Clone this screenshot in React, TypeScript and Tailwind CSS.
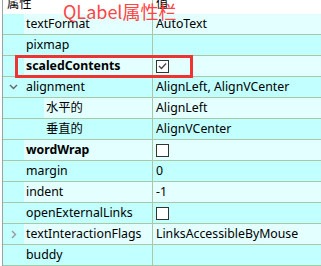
import React from "react";

type Row = {
  name: string;
  value?: string;
  check?: "on" | "off";
  bold?: boolean;
  child?: boolean;
  arrow?: "down" | "right";
};

const rows: Row[] = [
  { name: "textFormat", value: "AutoText" },
  { name: "pixmap" },
  { name: "scaledContents", check: "on", bold: true },
  { name: "alignment", value: "AlignLeft, AlignVCenter", arrow: "down" },
  { name: "水平的", value: "AlignLeft", child: true },
  { name: "垂直的", value: "AlignVCenter", child: true },
  { name: "wordWrap", check: "off", bold: true },
  { name: "margin", value: "0" },
  { name: "indent", value: "-1" },
  { name: "openExternalLinks", check: "off" },
  { name: "textInteractionFlags", value: "LinksAccessibleByMouse", arrow: "right" },
  { name: "buddy" },
];

const font = { fontFamily: '"Noto Sans", "Noto Sans CJK SC", sans-serif' };

function Check({ on }: { on: boolean }) {
  return (
    <div className="w-[13px] h-[13px] border border-[#333] bg-white flex items-center justify-center">
      {on && (
        <svg width="9" height="8" viewBox="0 0 9 8">
          <path d="M1 4 L3.5 6.5 L8 1.5" stroke="#444" strokeWidth="1.3" fill="none" />
        </svg>
      )}
    </div>
  );
}

export default function App() {
  return (
    <div className="relative w-[321px] h-[266px] overflow-hidden bg-white text-[12.3px] text-black" style={font}>
      <div className="ml-[2px] border-l border-[#a0a0a0] h-full">
        {/* header */}
        <div className="flex h-[14px] overflow-hidden bg-white">
          <div className="w-[149px] pl-[4px] leading-[14px] mt-[-3px]">属性</div>
          <div className="border-l border-[#a8c8a8] pl-[3px] leading-[14px] mt-[-3px]">值</div>
        </div>

        {rows.map((r, i) => {
          const light = i % 2 === 0;
          const bg = light ? "bg-[#e4ffff]" : "bg-[#c2ffff]";
          return (
            <div key={i} className="flex h-[21px] border-b border-[#a8c8a8]">
              <div className={`${r.child ? "w-[41px]" : "w-[21px]"} bg-[#c2ffff] flex items-center justify-center shrink-0`}>
                {r.arrow === "down" && (
                  <svg width="9" height="6" viewBox="0 0 9 6">
                    <path d="M1 1 L4.5 4.5 L8 1" stroke="#666" strokeWidth="1.4" fill="none" />
                  </svg>
                )}
                {r.arrow === "right" && (
                  <svg width="6" height="9" viewBox="0 0 6 9">
                    <path d="M1 1 L4.5 4.5 L1 8" stroke="#999" strokeWidth="1.4" fill="none" />
                  </svg>
                )}
              </div>
              <div className={`${r.child ? "w-[108px]" : "w-[128px]"} ${bg} flex items-center pl-[2px] ${r.bold ? "font-bold" : ""}`}>
                {r.name}
              </div>
              <div className={`flex-1 ${bg} border-l border-[#a8c8a8] flex items-center pl-[3px]`}>
                {r.check ? <Check on={r.check === "on"} /> : r.value}
              </div>
            </div>
          );
        })}
      </div>

      {/* annotation */}
      <div
        className="absolute left-[63px] top-[1px] text-[18px] leading-[21px] text-[#ff4444]"
        style={{ fontFamily: '"Noto Sans CJK SC", "Noto Sans", sans-serif' }}
      >
        QLabel属性栏
      </div>
      <div className="absolute left-[15px] top-[55px] w-[178px] h-[23px] border-[3px] border-[#ee3333]" />
    </div>
  );
}
